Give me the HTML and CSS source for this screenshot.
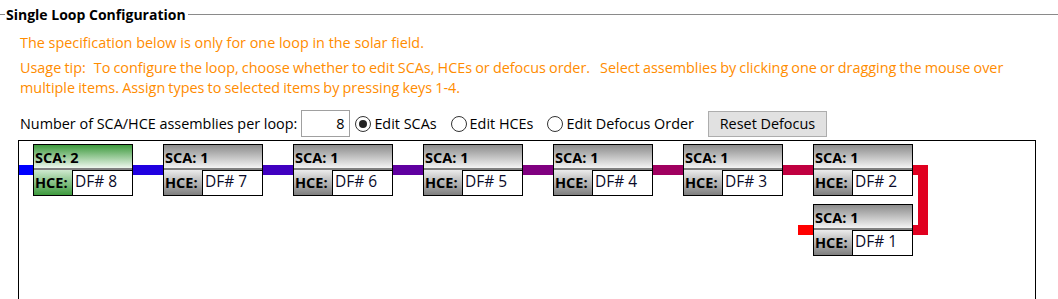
FILE: index.html
```html
<!DOCTYPE html>
<html>
<head>
<meta charset="utf-8">
<link rel="stylesheet" href="styles.css">
</head>
<body>
<div class="group">
  <div class="group-head">
    <span class="rule rule-short"></span>
    <span class="group-title">Single Loop Configuration</span>
    <span class="rule rule-long"></span>
  </div>
  <div class="group-body">
    <p class="note">The specification below is only for one loop in the solar field.</p>
    <p class="note tip">Usage tip:<span class="gap gap-a"></span>To configure the loop, choose whether to edit SCAs, HCEs or defocus order.<span class="gap gap-b"></span>Select assemblies by clicking one or dragging the mouse over<br>multiple items. Assign types to selected items by pressing keys 1-4.</p>
    <div class="controls">
      <span class="ctl-label">Number of SCA/HCE assemblies per loop:</span>
      <span class="numbox">8</span>
      <span class="radio checked"><span class="dot"></span></span><span class="radio-label">Edit SCAs</span>
      <span class="radio"></span><span class="radio-label">Edit HCEs</span>
      <span class="radio"></span><span class="radio-label">Edit Defocus Order</span>
      <span class="btn">Reset Defocus</span>
    </div>
    <div class="canvas">
      <div class="loop-row">
        <span class="seg seg-first c0"></span>
        <div class="card green">
          <div class="card-head">SCA: 2</div>
          <div class="card-strip"></div>
          <div class="card-foot"><span class="hce">HCE:</span><span class="df">DF# 8</span></div>
        </div>
        <span class="seg c1"></span>
        <div class="card">
          <div class="card-head">SCA: 1</div>
          <div class="card-strip"></div>
          <div class="card-foot"><span class="hce">HCE:</span><span class="df">DF# 7</span></div>
        </div>
        <span class="seg c2"></span>
        <div class="card">
          <div class="card-head">SCA: 1</div>
          <div class="card-strip"></div>
          <div class="card-foot"><span class="hce">HCE:</span><span class="df">DF# 6</span></div>
        </div>
        <span class="seg c3"></span>
        <div class="card">
          <div class="card-head">SCA: 1</div>
          <div class="card-strip"></div>
          <div class="card-foot"><span class="hce">HCE:</span><span class="df">DF# 5</span></div>
        </div>
        <span class="seg c4"></span>
        <div class="card">
          <div class="card-head">SCA: 1</div>
          <div class="card-strip"></div>
          <div class="card-foot"><span class="hce">HCE:</span><span class="df">DF# 4</span></div>
        </div>
        <span class="seg c5"></span>
        <div class="card">
          <div class="card-head">SCA: 1</div>
          <div class="card-strip"></div>
          <div class="card-foot"><span class="hce">HCE:</span><span class="df">DF# 3</span></div>
        </div>
        <span class="seg c6"></span>
        <div class="card">
          <div class="card-head">SCA: 1</div>
          <div class="card-strip"></div>
          <div class="card-foot"><span class="hce">HCE:</span><span class="df">DF# 2</span></div>
        </div>
      </div>
      <div class="loop-row loop-row-return">
        <span class="seg seg-stub c8"></span>
        <div class="card">
          <div class="card-head">SCA: 1</div>
          <div class="card-strip"></div>
          <div class="card-foot"><span class="hce">HCE:</span><span class="df">DF# 1</span></div>
        </div>
      </div>
      <div class="turn"></div>
    </div>
  </div>
</div>
</body>
</html>
```

FILE: styles.css
```css
html, body {
  margin: 0;
  padding: 0;
  background: #ffffff;
}
body {
  font-family: "Open Sans", "Noto Sans", sans-serif;
  font-size: 14px;
  color: #000;
  overflow: hidden;
}
.group-head {
  display: flex;
  align-items: center;
  height: 28px;
}
.rule {
  height: 1px;
  background: #8a8a8a;
}
.rule-short {
  width: 5px;
}
.rule-long {
  flex: 1;
  margin-left: 2px;
}
.group-title {
  font-weight: bold;
  font-size: 14px;
  margin-left: 1px;
}
.group-body {
  padding-left: 20px;
}
.note {
  margin: 5px 0 0 0;
  color: #ff8c00;
  font-size: 14.4px;
  line-height: 20px;
  white-space: nowrap;
}
.tip {
  margin-top: 5px;
  word-spacing: -0.6px;
}
.gap {
  display: inline-block;
}
.gap-a {
  width: 8px;
}
.gap-b {
  width: 10px;
}
.controls {
  display: flex;
  align-items: center;
  height: 27px;
  margin-top: 12px;
  font-size: 14.4px;
}
.ctl-label {
  margin-right: 4px;
}
.numbox {
  width: 49px;
  height: 27px;
  box-sizing: border-box;
  border: 1px solid #a0a0a0;
  text-align: right;
  padding-right: 5px;
  line-height: 25px;
  margin-right: 5px;
}
.radio {
  width: 16px;
  height: 16px;
  box-sizing: border-box;
  border: 1px solid #333;
  border-radius: 50%;
  display: flex;
  align-items: center;
  justify-content: center;
  margin-right: 3px;
}
.radio .dot {
  width: 8px;
  height: 8px;
  border-radius: 50%;
  background: #222;
}
.radio-label {
  margin-right: 14px;
}
.btn {
  width: 119px;
  height: 26px;
  box-sizing: border-box;
  border: 1px solid #adadad;
  background: #e1e1e1;
  text-align: center;
  line-height: 24px;
  margin-top: 1px;
}
.canvas {
  position: relative;
  margin-top: 3px;
  margin-left: -2px;
  width: 1018px;
  height: 200px;
  box-sizing: border-box;
  border: 1px solid #000;
  border-bottom: none;
}
.loop-row {
  display: flex;
  align-items: center;
  margin-top: 3px;
}
.loop-row-return {
  margin-top: 8px;
  padding-left: 779px;
}
.seg {
  height: 10px;
  width: 30px;
}
.seg-first {
  width: 14px;
}
.seg-stub {
  width: 15px;
}
.c0 { background: #0000ff; }
.c1 { background: #2000e0; }
.c2 { background: #4000c0; }
.c3 { background: #6000a0; }
.c4 { background: #800080; }
.c5 { background: #a00060; }
.c6 { background: #c00040; }
.c7 { background: #e00020; }
.c8 { background: #ff0000; }
.card {
  width: 100px;
  height: 52px;
  box-sizing: border-box;
  border: 1px solid #000;
  display: flex;
  flex-direction: column;
}
.card-head {
  height: 23px;
  line-height: 25px;
  font-weight: bold;
  font-size: 14.5px;
  padding-left: 1px;
  background: linear-gradient(to bottom, #8c8c8c, #f4f4f4);
}
.card-strip {
  height: 4px;
  background: #808080;
}
.card-foot {
  flex: 1;
  display: flex;
}
.hce {
  width: 38px;
  font-weight: bold;
  font-size: 14.5px;
  line-height: 25px;
  padding-left: 1px;
  box-sizing: border-box;
  background: linear-gradient(to bottom, #ececec, #7e7e7e);
}
.df {
  flex: 1;
  background: #fff;
  border-top: 1px solid #000;
  border-left: 1px solid #000;
  padding-left: 2px;
  font-size: 15.5px;
  line-height: 21px;
  color: #0a0a28;
}
.green .card-head {
  background: linear-gradient(to bottom, #3d9a3d, #eef7ee);
}
.green .hce {
  background: linear-gradient(to bottom, #cfe9cf, #3d9a3d);
}
.turn {
  position: absolute;
  left: 894px;
  top: 24px;
  width: 15px;
  height: 70px;
  box-sizing: border-box;
  border-top: 10px solid #e00020;
  border-right: 10px solid #e00020;
  border-bottom: 10px solid #e00020;
}
```
